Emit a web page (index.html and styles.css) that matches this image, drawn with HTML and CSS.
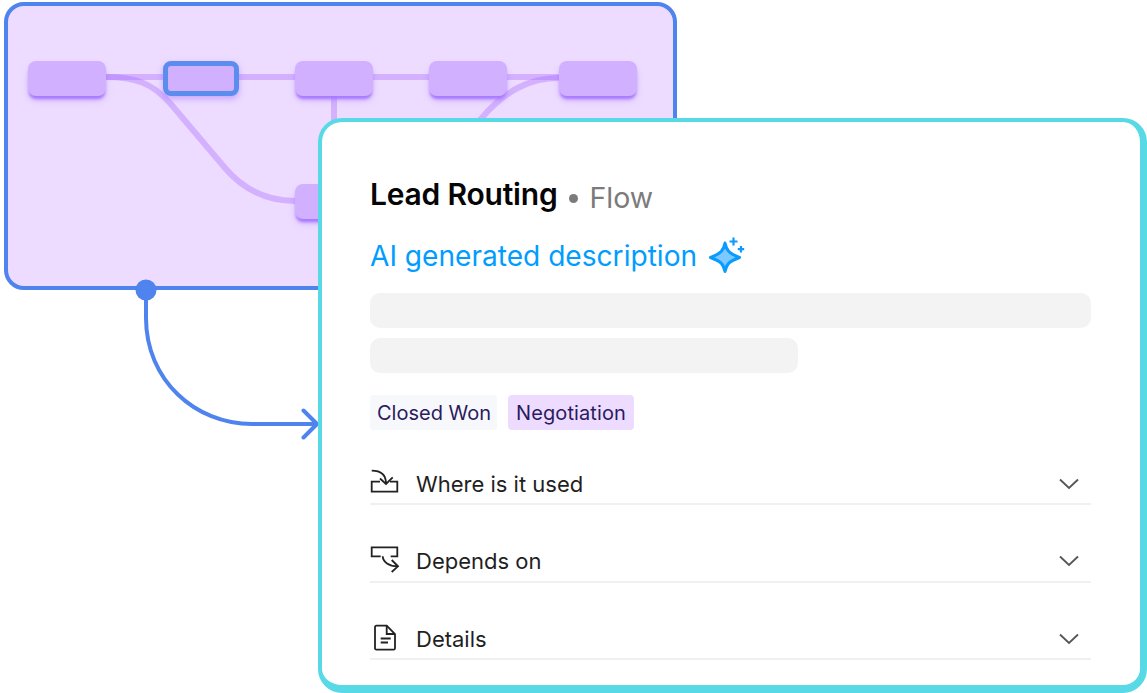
FILE: index.html
```html
<!DOCTYPE html>
<html lang="en">
	<head>
		<meta charset="UTF-8" />
		<title>Lead Routing</title>
		<link rel="stylesheet" href="styles.css">
	</head>

	<body>
		<div class="stage">
			<div class="flow-panel"></div>

			<svg class="wires" viewBox="0 0 1147 693">
				<path class="wire" d="M106 77H559" />
				<path class="wire" d="M106 77C135 77 152 83 170 103L225 168C243 189 265 201 295 201" />
				<path class="wire" d="M334 96V200" />
				<path class="wire" d="M559 78C530 78 505 90 480 120L450 160" />
				<path class="link" d="M146 290V318C146 380 195 424 252 424H316M303.500 410.500L317 424L303.500 437.500" />
				<circle class="link-dot" cx="146" cy="290" r="10.500" />
			</svg>

			<div class="node node-a"></div>
			<div class="node node-b"></div>
			<div class="node node-c"></div>
			<div class="node node-d"></div>
			<div class="node node-e"></div>
			<div class="node node-f"></div>

			<div class="card">
				<div class="title-row">
					<span class="title">Lead Routing</span>
					<span class="title-dot"></span>
					<span class="kind">Flow</span>
				</div>
				<div class="ai-row">
					<span>AI generated description</span>
					<svg class="sparkle" viewBox="0 0 38 36">
						<path class="sparkle-star" d="M17 6C18.500 13.500 21 16.500 31.500 20.500C21 24.500 18.500 27 17 34.500C15.500 27 13 24.500 2.500 20.500C13 16.500 15.500 13.500 17 6Z" />
						<path class="sparkle-plus" d="M25.500 0.500V8.500M21.500 4.500H29.500M33 9V15.500M29.800 12.200H36.200" />
					</svg>
				</div>
				<div class="bar bar-full"></div>
				<div class="bar bar-half"></div>
				<div class="tags">
					<span class="tag tag-grey">Closed Won</span>
					<span class="tag tag-purple">Negotiation</span>
				</div>
				<div class="row">
					<svg class="row-icon" viewBox="0 0 30 30">
						<path d="M10 12.700H1.700V22.700H27.300V12.700H20" />
						<path d="M1.700 1.700C8 1.700 16 4 16 14.500M10 9.500L16 15L22.700 8.300" />
					</svg>
					<span class="row-label">Where is it used</span>
					<svg class="chevron" viewBox="0 0 20 12"><path d="M1 1.500L10 10L19 1.500" /></svg>
				</div>
				<div class="row">
					<svg class="row-icon" viewBox="0 0 30 30">
						<path d="M10.700 10.300H1.700V1.300H27.300V10.300H20.700" />
						<path d="M12.700 10.300C13 16 19 20.300 27.300 20.300M21.700 14L28 20.300L21.700 26" />
					</svg>
					<span class="row-label">Depends on</span>
					<svg class="chevron" viewBox="0 0 20 12"><path d="M1 1.500L10 10L19 1.500" /></svg>
				</div>
				<div class="row">
					<svg class="row-icon" viewBox="0 0 30 30">
						<path d="M6.500 1.700H16.700L25 10V24.200C25 25 24.500 25.700 23.500 25.700H6.500C5.500 25.700 5 25 5 24.200V3.200C5 2.200 5.500 1.700 6.500 1.700Z" />
						<path d="M16.700 1.700V10H25M10.700 14.500H20.700M10.700 18.500H18" />
					</svg>
					<span class="row-label">Details</span>
					<svg class="chevron" viewBox="0 0 20 12"><path d="M1 1.500L10 10L19 1.500" /></svg>
				</div>
			</div>
		</div>
	</body>
</html>
```

FILE: styles.css
```css
* {
	box-sizing: border-box;
}

body {
	margin: 0;
	background: white;
	font-family: Inter, "Liberation Sans", sans-serif;
	overflow: hidden;
}

.stage {
	position: relative;
	width: 1147px;
	height: 693px;
	overflow: hidden;
}

.flow-panel {
	position: absolute;
	left: 4px;
	top: 2px;
	width: 673px;
	height: 288px;
	background: #eddcff;
	border: 4px solid #4f83ee;
	border-radius: 20px;
}

.wires {
	position: absolute;
	left: 0;
	top: 0;
	width: 1147px;
	height: 693px;
	fill: none;
}

.wire {
	stroke: #a667ff;
	stroke-opacity: 0.36;
	stroke-width: 6;
}

.link {
	stroke: #4f83ee;
	stroke-width: 4;
	stroke-linecap: round;
	stroke-linejoin: round;
}

.link-dot {
	fill: #4f83ee;
}

.node {
	position: absolute;
	top: 61px;
	width: 78px;
	height: 35px;
	background: #d1b1ff;
	border-radius: 8px;
	box-shadow: 0 4px 3px -1px #a878ff, 0 5px 7px -1px rgba(160, 110, 255, 0.4);
}

.node-a {
	left: 28px;
}

.node-b {
	left: 163px;
	width: 76px;
	border: 5px solid #5b8def;
	box-shadow: 0 3px 6px rgba(160, 110, 255, 0.5);
}

.node-c {
	left: 295px;
}

.node-d {
	left: 429px;
}

.node-e {
	left: 559px;
}

.node-f {
	left: 295px;
	top: 184px;
}

.card {
	position: absolute;
	left: 318px;
	top: 118px;
	width: 829px;
	height: 575px;
	padding: 52px 0 0 48px;
	background: white;
	border-style: solid;
	border-color: #57d9e6;
	border-width: 4px 7px 8px 4px;
	border-radius: 24px;
}

.title-row {
	display: flex;
	align-items: center;
	height: 40px;
}

.title {
	font-size: 30px;
	font-weight: 600;
	letter-spacing: -0.2px;
	color: #050505;
}

.title-dot {
	width: 9px;
	height: 9px;
	margin: 9px 12px 0 11px;
	border-radius: 50%;
	background: #7b7b7b;
}

.kind {
	margin-top: 6px;
	font-size: 28.500px;
	color: #7b7b7b;
}

.ai-row {
	display: flex;
	align-items: center;
	margin-top: 24px;
	height: 36px;
	font-size: 28.100px;
	color: #009dff;
}

.sparkle {
	width: 38px;
	height: 36px;
	margin-left: 11px;
	margin-top: -3px;
	fill: none;
}

.sparkle-star {
	fill: #7cc8ff;
	stroke: #0a9bff;
	stroke-width: 3;
	stroke-linejoin: round;
}

.sparkle-plus {
	stroke: #0a9bff;
	stroke-width: 2.200;
}

.bar {
	height: 35px;
	background: #f3f3f3;
	border-radius: 10px;
}

.bar-full {
	margin-top: 19px;
	width: 721px;
}

.bar-half {
	margin-top: 10px;
	width: 428px;
}

.tags {
	display: flex;
	gap: 11px;
	margin-top: 22px;
}

.tag {
	display: flex;
	align-items: center;
	height: 35px;
	padding: 0 8px;
	border-radius: 4px;
	font-size: 20px;
	color: #2c1a5e;
}

.tag-grey {
	padding: 0 6px 0 7px;
	background: #f7f8fb;
}

.tag-purple {
	background: #eddcff;
	letter-spacing: 0.1px;
}

.row {
	display: flex;
	align-items: center;
	width: 721px;
	height: 57px;
	margin-bottom: 20.500px;
	padding: 16px 2px 0 0;
	border-bottom: 2px solid #f0f0f0;
}

.tags + .row {
	margin-top: 18px;
}

.row-icon {
	width: 30px;
	height: 30px;
	margin-right: 16px;
	fill: none;
	stroke: #222;
	stroke-width: 1.800;
}

.row-label {
	flex: 1;
	font-size: 22px;
	color: #1f1f1f;
}

.chevron {
	width: 20px;
	height: 12px;
	margin-right: 10px;
	fill: none;
	stroke: #555;
	stroke-width: 1.800;
}
```
